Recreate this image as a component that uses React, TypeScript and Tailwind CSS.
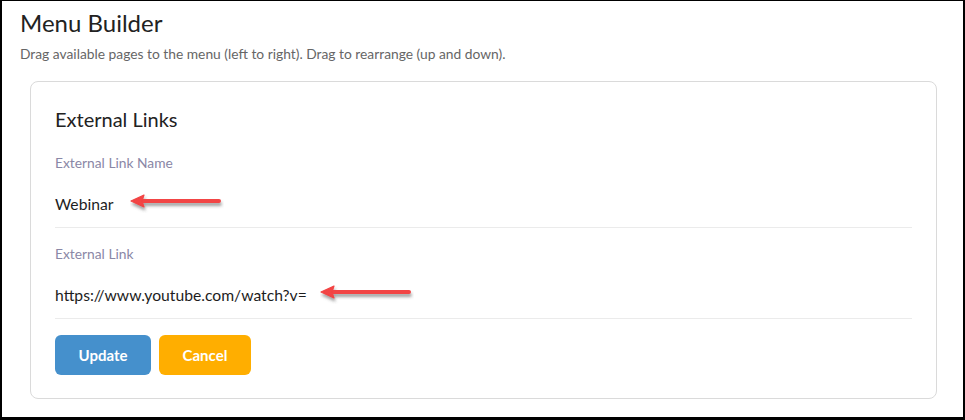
const font = { fontFamily: 'Lato, "Noto Sans", sans-serif' };

const Arrow = () => (
    <svg width="94" height="22" viewBox="0 0 94 22" className="shrink-0">
        <defs>
            <filter id="arrowShadow" x="-10%" y="-50%" width="120%" height="200%">
                <feDropShadow dx="1" dy="3" stdDeviation="1.6" floodColor="#555" floodOpacity="0.55" />
            </filter>
        </defs>
        <g filter="url(#arrowShadow)" fill="#f24444" stroke="#f24444">
            <line x1="11" y1="8" x2="89" y2="8" strokeWidth="4" strokeLinecap="round" />
            <path d="M1 8 L14 2 L12 8 L14 14 Z" strokeWidth="1.2" strokeLinejoin="round" />
        </g>
    </svg>
);

type FieldProps = {
    label: string;
    value: string;
    arrowGap: string;
};

const Field = ({ label, value, arrowGap }: FieldProps) => (
    <div>
        <div className="text-[13.8px] leading-[20px] text-[#8a87a6]">{label}</div>
        <div className="mt-[19px] flex items-center border-b border-[#ebebeb] pb-[11px]">
            <span className="text-[15.7px] leading-[24px] text-[#1d1d1d]">{value}</span>
            <span className={arrowGap}>
                <Arrow />
            </span>
        </div>
    </div>
);

const App = () => {
    return (
        <div className="flex h-[420px] w-[965px] bg-black pb-[3px] pl-[2px] pr-[2px] pt-[1px]" style={font}>
            <div className="flex flex-1 flex-col bg-white pl-[18px] pt-[6px]">
                <h1 className="text-[24px] leading-[32px] text-[#222]">Menu Builder</h1>
                <p className="mt-[5px] text-[13.8px] leading-[20px] text-[#666]">
                    Drag available pages to the menu (left to right). Drag to rearrange (up and down).
                </p>

                <div className="ml-[10px] mr-[26px] mt-[17px] rounded-lg border border-[#dadada] px-6 pb-[23px] pt-[23px]">
                    <h2 className="text-[20px] leading-[28px] text-[#222]">External Links</h2>

                    <div className="mt-[20px] flex flex-col gap-[16px]">
                        <Field label="External Link Name" value="Webinar" arrowGap="ml-[17px]" />
                        <Field label="External Link" value="https://www.youtube.com/watch?v=" arrowGap="ml-[13px]" />
                    </div>

                    <div className="mt-[16px] flex gap-2">
                        <button className="h-10 w-[96px] rounded-md bg-[#4590cc] text-[15px] font-bold text-white">
                            Update
                        </button>
                        <button className="h-10 w-[92px] rounded-md bg-[#ffae00] text-[15px] font-bold text-white">
                            Cancel
                        </button>
                    </div>
                </div>
            </div>
        </div>
    );
};

export default App;
